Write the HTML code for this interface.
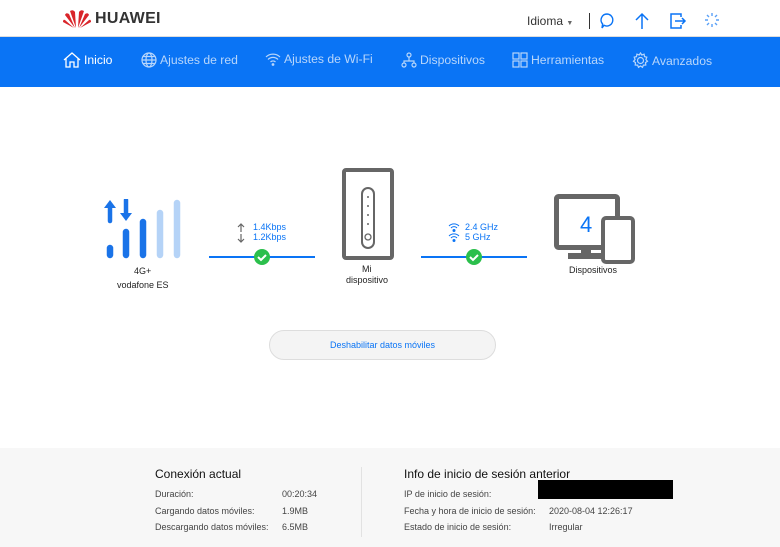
<!DOCTYPE html>
<html><head><meta charset="utf-8"><style>
*{margin:0;padding:0;box-sizing:border-box}
body{width:780px;height:547px;position:relative;background:#fff;font-family:"Liberation Sans",Arial,sans-serif;overflow:hidden}
.a{position:absolute;white-space:nowrap}
.nav{position:absolute;top:37px;left:0;width:780px;height:50px;background:#0a74f5}
.ni{position:absolute;top:15px;font-size:12.2px;color:#b8d6fb;display:flex;align-items:center;gap:3px}
.foot{position:absolute;top:448px;left:0;width:780px;height:99px;background:#f7f7f7}
.f{font-size:9px;color:#444}
.blue{color:#0a74f5}
</style></head><body>
<svg class="a" style="left:62px;top:8px" width="30" height="22" viewBox="0 0 30 22">
<g fill="#d9252a">
<path d="M14 20 L8 3 Q11 1 13 4 Z"/><path d="M16 20 L22 3 Q19 1 17 4 Z"/>
<path d="M13 20 L3 7 Q4 4 7 6 Z"/><path d="M17 20 L27 7 Q26 4 23 6 Z"/>
<path d="M12 20 L1 14 Q1 11 3 12 Z"/><path d="M18 20 L29 14 Q29 11 27 12 Z"/>
</g></svg>
<div class="a" style="left:95px;top:10px;font-size:16px;font-weight:bold;color:#333;letter-spacing:0.3px">HUAWEI</div>
<div class="a" style="left:527px;top:14px;font-size:12px;color:#333">Idioma <span style="font-size:7px;color:#666">▼</span></div>
<div class="a" style="left:589px;top:13px;width:1px;height:16px;background:#333"></div>
<svg class="a" style="left:598px;top:12px" width="18" height="18" viewBox="0 0 18 18"><path d="M9 2a6 6 0 1 1-3 11.3L4 16l0.6-4A6 6 0 0 1 9 2z" fill="none" stroke="#0a74f5" stroke-width="1.4"/></svg>
<svg class="a" style="left:633px;top:11px" width="18" height="20" viewBox="0 0 18 20"><path d="M9 18V3M3 9l6-6 6 6" fill="none" stroke="#0a74f5" stroke-width="1.5"/></svg>
<svg class="a" style="left:669px;top:12px" width="18" height="18" viewBox="0 0 18 18"><path d="M12 5V2H2v14h10v-3M6 9h10M13 6l3 3-3 3" fill="none" stroke="#0a74f5" stroke-width="1.5"/></svg>
<svg class="a" style="left:704px;top:12px" width="16" height="16" viewBox="0 0 16 16" stroke="#59a0f7" stroke-width="1.4"><path d="M8 1v3M8 12v3M1 8h3M12 8h3M3 3l2 2M11 11l2 2M3 13l2-2M11 5l2-2"/></svg>
<div class="a" style="left:0;top:36px;width:780px;height:1px;background:#ddd"></div>
<div class="nav">
<div class="ni" style="left:63px;color:#fff"><svg width="18" height="16" viewBox="0 0 18 16"><path d="M1 8L9 1l8 7M3 6v9h4v-5h4v5h4V6" fill="none" stroke="#fff" stroke-width="1.3"/></svg>Inicio</div>
<div class="ni" style="left:141px"><svg width="16" height="16" viewBox="0 0 16 16" fill="none" stroke="#b8d6fb" stroke-width="1.2"><circle cx="8" cy="8" r="7"/><ellipse cx="8" cy="8" rx="3" ry="7"/><path d="M1 8h14M2 4.5h12M2 11.5h12"/></svg>Ajustes de red</div>
<div class="ni" style="left:265px"><svg width="16" height="14" viewBox="0 0 16 14" fill="none" stroke="#b8d6fb" stroke-width="1.2"><path d="M1 5a10 10 0 0 1 14 0M3 7.5a7 7 0 0 1 10 0M5.5 10a3.5 3.5 0 0 1 5 0"/><circle cx="8" cy="12.5" r="0.8" fill="#b8d6fb"/></svg>Ajustes de Wi-Fi</div>
<div class="ni" style="left:401px"><svg width="16" height="16" viewBox="0 0 16 16" fill="none" stroke="#b8d6fb" stroke-width="1.2"><circle cx="8" cy="3" r="2"/><circle cx="3" cy="13" r="2"/><circle cx="13" cy="13" r="2"/><path d="M8 5v4M3 11V9h10v2"/></svg>Dispositivos</div>
<div class="ni" style="left:512px"><svg width="16" height="16" viewBox="0 0 16 16" fill="none" stroke="#b8d6fb" stroke-width="1.2"><rect x="1" y="1" width="6" height="6"/><rect x="9" y="1" width="6" height="6"/><rect x="1" y="9" width="6" height="6"/><rect x="9" y="9" width="6" height="6"/></svg>Herramientas</div>
<div class="ni" style="left:632px"><svg width="17" height="17" viewBox="0 0 17 17" fill="none" stroke="#b8d6fb" stroke-width="1.2"><circle cx="8.5" cy="8.5" r="3"/><path d="M8.5 1l1.3 2 2.3-.8.4 2.4 2.3.6-.9 2.3 1.6 1.8-2 1.3.3 2.4-2.4.1-.9 2.2-2-1.3-2 1.3-.9-2.2-2.4-.1.3-2.4-2-1.3 1.6-1.8-.9-2.3 2.3-.6.4-2.4 2.3.8z"/></svg>Avanzados</div>
</div>
<!-- signal -->
<svg class="a" style="left:104px;top:199px" width="80" height="60" viewBox="0 0 80 60">
<path d="M6 22V6" stroke="#1a73e8" stroke-width="4.5" stroke-linecap="round"/><path d="M0 9l6-8 6 8z" fill="#1a73e8"/>
<path d="M22 1v16" stroke="#1a73e8" stroke-width="4.5" stroke-linecap="round"/><path d="M16 14l6 8 6-8z" fill="#1a73e8"/>
<g stroke-linecap="round" stroke-width="6.5"><line x1="6" y1="49" x2="6" y2="56" stroke="#1a73e8"/><line x1="22" y1="33" x2="22" y2="56" stroke="#1a73e8"/><line x1="39" y1="23" x2="39" y2="56" stroke="#1a73e8"/><line x1="56" y1="14" x2="56" y2="56" stroke="#b5d3f7"/><line x1="73" y1="4" x2="73" y2="56" stroke="#b5d3f7"/></g></svg>
<div class="a f" style="left:134px;top:266px;color:#222">4G+</div>
<div class="a f" style="left:117px;top:280px;color:#222">vodafone ES</div>
<!-- lines -->
<div class="a" style="left:209px;top:256px;width:106px;height:2px;background:#0a74f5"></div>
<div class="a" style="left:421px;top:256px;width:106px;height:2px;background:#0a74f5"></div>
<svg class="a" style="left:254px;top:249px" width="16" height="16" viewBox="0 0 16 16"><circle cx="8" cy="8" r="8" fill="#2bbf4c"/><path d="M4 8l3 3 5-5" stroke="#fff" stroke-width="2" fill="none"/></svg>
<svg class="a" style="left:466px;top:249px" width="16" height="16" viewBox="0 0 16 16"><circle cx="8" cy="8" r="8" fill="#2bbf4c"/><path d="M4 8l3 3 5-5" stroke="#fff" stroke-width="2" fill="none"/></svg>
<svg class="a" style="left:236px;top:223px" width="10" height="20" viewBox="0 0 10 20" stroke="#666" stroke-width="1.2" fill="none"><path d="M5 9V1M2 4l3-3 3 3M5 11v8M2 16l3 3 3-3"/></svg>
<div class="a blue" style="left:253px;top:222px;font-size:9px;line-height:10px">1.4Kbps<br>1.2Kbps</div>
<svg class="a" style="left:448px;top:223px" width="12" height="20" viewBox="0 0 12 20" stroke="#0a74f5" stroke-width="1" fill="none"><path d="M1 3a7 7 0 0 1 10 0M3 5a4 4 0 0 1 6 0M1 13a7 7 0 0 1 10 0M3 15a4 4 0 0 1 6 0"/><circle cx="6" cy="7.5" r="1" fill="#0a74f5"/><circle cx="6" cy="17.5" r="1" fill="#0a74f5"/></svg>
<div class="a blue" style="left:465px;top:222px;font-size:9px;line-height:10px">2.4 GHz<br>5 GHz</div>
<!-- router -->
<div class="a" style="left:342px;top:168px;width:52px;height:92px;border:4px solid #666;border-radius:4px"></div>
<div class="a" style="left:361px;top:187px;width:14px;height:62px;border:2px solid #666;border-radius:7px"></div>
<svg class="a" style="left:361px;top:187px" width="14" height="62"><g fill="#666"><circle cx="7" cy="10" r="1"/><circle cx="7" cy="19" r="1"/><circle cx="7" cy="28" r="1"/><circle cx="7" cy="37" r="1"/></g><circle cx="7" cy="50" r="3" stroke="#666" stroke-width="1.3" fill="none"/></svg>
<div class="a f" style="left:362px;top:264px;color:#222">Mi</div>
<div class="a f" style="left:346px;top:275px;color:#222">dispositivo</div>
<!-- devices -->
<svg class="a" style="left:554px;top:194px" width="82" height="70" viewBox="0 0 82 70">
<rect x="2.5" y="2.5" width="61" height="51" rx="2" fill="none" stroke="#666" stroke-width="5"/>
<rect x="27" y="54" width="10" height="7" fill="#666"/><rect x="14" y="59" width="36" height="6" fill="#666"/>
<rect x="49" y="24" width="30" height="44" rx="3" fill="#fff" stroke="#666" stroke-width="4"/>
<text x="26" y="38" font-family="Liberation Sans,sans-serif" font-size="22" fill="#0a74f5">4</text></svg>
<div class="a f" style="left:569px;top:265px;color:#222">Dispositivos</div>
<!-- button -->
<div class="a" style="left:269px;top:330px;width:227px;height:30px;border:1px solid #ddd;border-radius:15px;background:#f4f4f4;text-align:center;line-height:28px;font-size:9px;color:#0a74f5">Deshabilitar datos móviles</div>
<!-- footer -->
<div class="foot"></div>
<div class="a" style="left:155px;top:467px;font-size:12px;color:#111">Conexión actual</div>
<div class="a f" style="left:155px;top:489px">Duración:</div><div class="a f" style="left:282px;top:489px">00:20:34</div>
<div class="a f" style="left:155px;top:506px">Cargando datos móviles:</div><div class="a f" style="left:282px;top:506px">1.9MB</div>
<div class="a f" style="left:155px;top:522px">Descargando datos móviles:</div><div class="a f" style="left:282px;top:522px">6.5MB</div>
<div class="a" style="left:361px;top:467px;width:1px;height:70px;background:#e2e2e2"></div>
<div class="a" style="left:404px;top:467px;font-size:12px;color:#111">Info de inicio de sesión anterior</div>
<div class="a f" style="left:404px;top:489px">IP de inicio de sesión:</div>
<div class="a" style="left:538px;top:480px;width:135px;height:19px;background:#000"></div>
<div class="a f" style="left:404px;top:506px">Fecha y hora de inicio de sesión:</div><div class="a f" style="left:549px;top:506px">2020-08-04 12:26:17</div>
<div class="a f" style="left:404px;top:522px">Estado de inicio de sesión:</div><div class="a f" style="left:549px;top:522px">Irregular</div>
</body></html>
